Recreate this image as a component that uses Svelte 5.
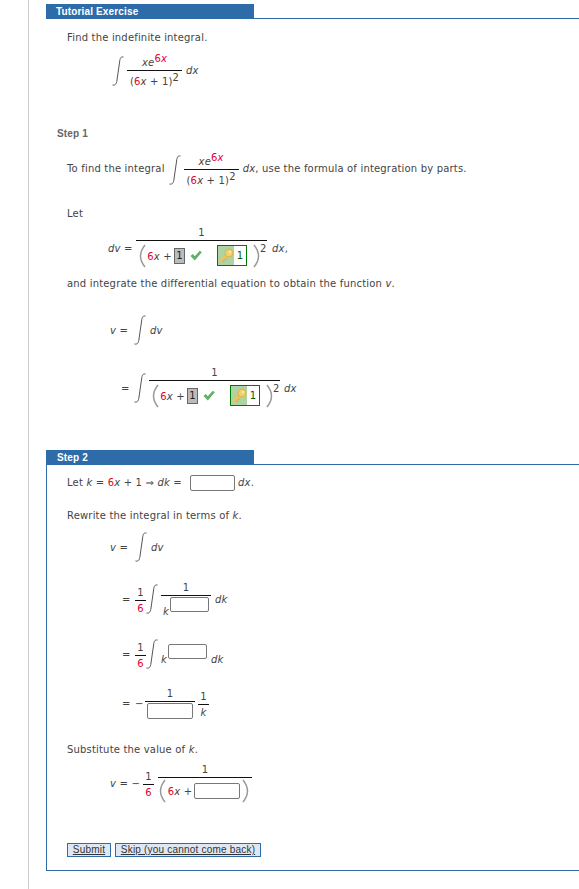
<script>
  // WebAssign-style tutorial exercise
</script>

{#snippet integral()}
  <svg class="int" width="12" height="30" viewBox="0 0 12 30" aria-hidden="true">
    <path d="M11.500 1 C9 0.500 8 2 7.600 6 L5 24 C4.500 28.500 3 29.500 0.500 29" fill="none" stroke="#555" stroke-width="1"/>
  </svg>
{/snippet}

{#snippet lparen()}
  <svg class="paren" width="7" height="24" viewBox="0 0 7 24" aria-hidden="true"><path d="M6 1 C2 6 1.500 9 1.500 12 C1.500 15 2 18 6 23" fill="none" stroke="#999" stroke-width="1.500"/></svg>
{/snippet}

{#snippet rparen()}
  <svg class="paren" width="7" height="24" viewBox="0 0 7 24" aria-hidden="true"><path d="M1 1 C5 6 5.500 9 5.500 12 C5.500 15 5 18 1 23" fill="none" stroke="#999" stroke-width="1.500"/></svg>
{/snippet}

{#snippet bigfrac()}
  <span class="frac big">
    <span class="num">1</span>
    <span class="den dflex">
      {@render lparen()}
      <span class="mi"><span class="red">6</span><i>x</i> +</span>
      <span class="given">1</span>
      <svg class="check" width="12" height="11" viewBox="0 0 12 11" aria-hidden="true"><path d="M0.500 6 L2.800 4 L4.800 6.300 L9.800 0.800 L11.800 2.300 L4.800 10.500 Z" fill="#5fb165"/></svg>
      <span class="key-box">
        <span class="key-bg">
          <svg width="15" height="15" viewBox="0 0 15 15" aria-hidden="true">
            <path d="M8 7 L2 13" fill="none" stroke="#eec358" stroke-width="3" stroke-linecap="round"/>
            <path d="M4 12.500 L5.500 14 M6 10.500 L7.500 12" fill="none" stroke="#e2b044" stroke-width="1.600"/>
            <circle cx="10" cy="5" r="4" fill="#f2d06a" stroke="#d9a83a" stroke-width=".7"/>
            <circle cx="11" cy="4" r="1" fill="#fff3c4"/>
          </svg>
        </span>
        <span class="key-val">1</span>
      </span>
      {@render rparen()}
      <span class="psup">2</span>
    </span>
  </span>
{/snippet}

{#snippet fraction()}
  <span class="frac f0">
    <span class="num"><i>xe</i><sup class="red"><span>6</span><i>x</i></sup></span>
    <span class="den">(<span class="red">6</span><i>x</i> + 1)<sup>2</sup></span>
  </span>
{/snippet}

{#snippet sixth()}
  <span class="frac small"><span class="num">1</span><span class="den"><span class="red">6</span></span></span>
{/snippet}

<div class="page">
  <div class="bar"><span class="tab">Tutorial Exercise</span></div>
  <p class="t find">Find the indefinite integral.</p>
  <div class="eq e0">
    {@render integral()}
    {@render fraction()}
    <i>dx</i>
  </div>

  <p class="step1">Step 1</p>
  <div class="t eq s1">
    <span>To find the integral</span>
    {@render integral()}
    {@render fraction()}
    <span><i>dx</i>, use the formula of integration by parts.</span>
  </div>
  <p class="t let">Let</p>
  <div class="eq e1">
    <span class="lhs"><i>dv</i> =</span>
    {@render bigfrac()}
    <span class="after"><i>dx</i>,</span>
  </div>
  <p class="t and">and integrate the differential equation to obtain the function <i>v</i>.</p>
  <div class="eq e2">
    <span class="lhs"><i>v</i> =</span>
    {@render integral()}
    <i class="low">dv</i>
  </div>
  <div class="eq e3">
    <span class="lhs">=</span>
    {@render integral()}
    {@render bigfrac()}
    <span class="after"><i>dx</i></span>
  </div>

  <section class="step2">
    <div class="bar b2"><span class="tab">Step 2</span></div>
    <div class="t eq s2">
      <span class="lead">Let <i>k</i> = <span class="red">6</span><i>x</i> + 1 ⇒ <i>dk</i> =</span>
      <span class="box w45"></span>
      <span><i>dx</i>.</span>
    </div>
    <p class="t rewrite">Rewrite the integral in terms of <i>k</i>.</p>
    <div class="eq e2 e4">
      <span class="lhs"><i>v</i> =</span>
      {@render integral()}
      <i class="low">dv</i>
    </div>
    <div class="eq e5">
      <span class="lhs">=</span>
      {@render sixth()}
      {@render integral()}
      <span class="frac f5">
        <span class="num">1</span>
        <span class="den dflex kden"><i class="kdown">k</i><span class="box w39"></span></span>
      </span>
      <i class="low">dk</i>
    </div>
    <div class="eq e6">
      <span class="lhs">=</span>
      {@render sixth()}
      {@render integral()}
      <span class="k6"><i class="klow">k</i><span class="box w39 up"></span></span>
      <i class="dk6">dk</i>
    </div>
    <div class="eq e7">
      <span class="lhs">=</span>
      <span class="minus">−</span>
      <span class="frac f7">
        <span class="num">1</span>
        <span class="den dflex cen"><span class="box w46"></span></span>
      </span>
      <span class="frac small"><span class="num">1</span><span class="den"><i>k</i></span></span>
    </div>
    <p class="t subst">Substitute the value of <i>k</i>.</p>
    <div class="eq e8">
      <span class="lhs"><i>v</i> = −</span>
      {@render sixth()}
      <span class="frac f8">
        <span class="num">1</span>
        <span class="den dflex">
          {@render lparen()}
          <span class="mi"><span class="red">6</span><i>x</i> +</span>
          <span class="box w46"></span>
          {@render rparen()}
        </span>
      </span>
    </div>
    <div class="buttons">
      <button type="button" class="submit">Submit</button>
      <button type="button" class="skip">Skip (you cannot come back)</button>
    </div>
  </section>
</div>

<style>
  :global(body) { margin: 0; background: #fff; }
  .page {
    box-sizing: border-box;
    margin-left: 28px;
    width: 551px;
    height: 889px;
    overflow: hidden;
    border-left: 1px solid #ccc;
    padding: 4px 0 0 16px;
    font: 10px/12px "DejaVu Sans", Verdana, sans-serif;
    letter-spacing: .18px;
    color: #444;
  }
  .bar {
    box-sizing: border-box;
    height: 15px;
    margin-left: 1px;
    border-bottom: 1px solid #2d6ca8;
  }
  .tab {
    display: block;
    box-sizing: border-box;
    width: 208px;
    height: 15px;
    padding-left: 10px;
    background: #2d6ca8;
    color: #fff;
    font: bold 10px/15px "Liberation Sans", Arial, sans-serif;
    letter-spacing: .15px;
  }
  p { margin: 0; }
  .t { margin-left: 22px; height: 12px; line-height: 14px; white-space: nowrap; }
  .find { margin-top: 12px; }
  .eq { display: flex; align-items: center; white-space: nowrap; }
  .int, .paren, .check { flex: none; }
  sup { font-size: 10px; line-height: 0; vertical-align: 4px; }
  .red { color: #e4002b; }
  .low, .lhs, .after { margin-top: 2px; }

  .frac { display: inline-flex; flex-direction: column; flex: none; }
  .num { box-sizing: content-box; height: 14px; line-height: 16px; padding-bottom: 1px; border-bottom: 1px solid #111; text-align: center; }
  .den { text-align: center; line-height: 16px; white-space: pre; }
  .dflex { display: flex; align-items: center; justify-content: flex-start; }

  .f0 { width: 55px; margin: 0 4px 0 3px; }
  .f0 .num { height: 15px; line-height: 17px; }
  .f0 .den { height: 17px; line-height: 21px; }
  .e0 { margin: 13px 0 0 67px; height: 30px; }

  .step1 { margin: 42px 0 0 12px; font: bold 10px/12px "Liberation Sans", Arial, sans-serif; color: #666; }

  .s1 { margin-top: 23px; line-height: 12px; }
  .s1 .int { margin-left: 4px; }
  .s1 .int, .s1 .frac { margin-top: 2px; }
  .let { margin-top: 32px; }

  .e1 { margin: 6px 0 0 63px; height: 45px; }
  .lhs { flex: none; width: 24px; margin-right: 4px; }
  .big { width: 131px; }
  .big .den { box-sizing: border-box; height: 29px; padding-left: 3px; }
  .after { margin-left: 5px; }
  .mi { flex: none; box-sizing: border-box; width: 29px; margin: 2px 0 0 -1px; white-space: pre; line-height: 12px; }
  .given {
    flex: none;
    box-sizing: border-box;
    width: 11px; height: 16px;
    background: #bbb;
    border: 1px solid #666;
    text-align: center;
    line-height: 14px;
    letter-spacing: 0;
    color: #222;
  }
  .check { margin-left: 5px; }
  .key-box {
    display: inline-flex;
    flex: none;
    box-sizing: border-box;
    margin-left: 15px;
    width: 30px; height: 21px;
    border: 1px solid #007a00;
  }
  .key-bg { width: 16px; background: #aed3a5; display: flex; align-items: center; justify-content: center; }
  .key-val { flex: 1; text-align: center; line-height: 19px; color: #006000; }
  .key-box + .paren { margin-left: 6px; }
  .psup { flex: none; margin-bottom: 14px; line-height: 12px; }

  .and { margin-top: 7px; }
  .e2 { margin: 26px 0 0 65px; height: 30px; }
  .e2 .lhs { width: 19px; margin-right: 5px; }
  .e2 .int { margin-right: 4px; }
  .e3 { margin: 20px 0 0 76px; height: 45px; }
  .e3 .lhs, .e5 .lhs, .e6 .lhs, .e7 .lhs { width: 8px; margin-right: 5px; }
  .e3 .int { margin-right: 3px; }
  .e3 .after { margin-left: 4px; }

  .step2 {
    box-sizing: border-box;
    margin: 40px 0 0 1px;
    height: 421px;
    border-left: 1px solid #2d6ca8;
    border-bottom: 1px solid #2d6ca8;
  }
  .b2 { margin-left: -1px; }
  .b2 .tab { padding-left: 11px; }
  .step2 .t { margin-left: 20px; }
  .s2 { margin-top: 10px; height: 16px; line-height: 12px; }
  .lead { width: 123px; flex: none; }
  .s2 .box { margin-right: 3px; }
  .box {
    display: block;
    flex: none;
    box-sizing: border-box;
    background: #fff;
    border: 1px solid #777;
    border-radius: 2px;
    height: 16px;
  }
  .w45 { width: 45px; }
  .w46 { width: 46px; }
  .w39 { width: 39px; height: 15px; }
  .step2 .rewrite { margin-top: 18px; }
  .e4 { margin: 11px 0 0 63px; }
  .e4 .lhs { width: 20px; }

  .small { width: 11px; margin-top: 2px; }
  .small .num { height: 16px; line-height: 17px; padding-bottom: 0; }
  .small .den { height: 15px; line-height: 16px; }

  .e5 { margin: 22px 0 0 75px; height: 30px; }
  .e5 .int { margin-right: 3px; }
  .f5 { width: 50px; margin-right: 4px; }
  .f5 .kden { height: 23px; align-items: flex-start; padding-left: 2px; line-height: 14px; }
  .kdown { margin-top: 9px; margin-right: 1px; }
  .f5 .box { margin-top: 1px; }

  .e6 { margin: 25px 0 0 75px; height: 30px; }
  .e6 .int { margin-right: 3px; }
  .k6 { display: flex; align-items: flex-start; height: 30px; }
  .klow { margin-top: 15px; width: 7px; }
  .up { margin-top: 5px; }
  .dk6 { margin: 11px 0 0 4px; }

  .e7 { margin: 17px 0 0 75px; height: 34px; }
  .minus { flex: none; width: 10px; margin-top: 2px; }
  .f7 { width: 50px; margin-right: 3px; }
  .f7 .cen { justify-content: center; height: 18px; }

  .step2 .subst { margin-top: 23px; }
  .e8 { margin: 7px 0 0 63px; height: 42px; }
  .e8 .lhs { width: 33px; margin-right: 0; }
  .f8 { width: 94px; margin-left: 4px; }
  .f8 .den { height: 26px; padding-left: 1px; }
  .f8 .mi { width: 28px; margin-left: 0; }
  .f8 .box + .paren { margin-left: 2px; }

  .buttons { display: flex; gap: 4px; margin: 39px 0 0 20px; }
  button {
    box-sizing: border-box;
    height: 14px;
    padding: 0;
    font: 10px/12px "Liberation Sans", Arial, sans-serif;
    color: #333;
    text-decoration: underline;
    background: #dfe8f2;
    border: 1px solid #2d6ca8;
    letter-spacing: .2px;
  }
  .submit { width: 44px; }
  .skip { width: 146px; }
</style>
